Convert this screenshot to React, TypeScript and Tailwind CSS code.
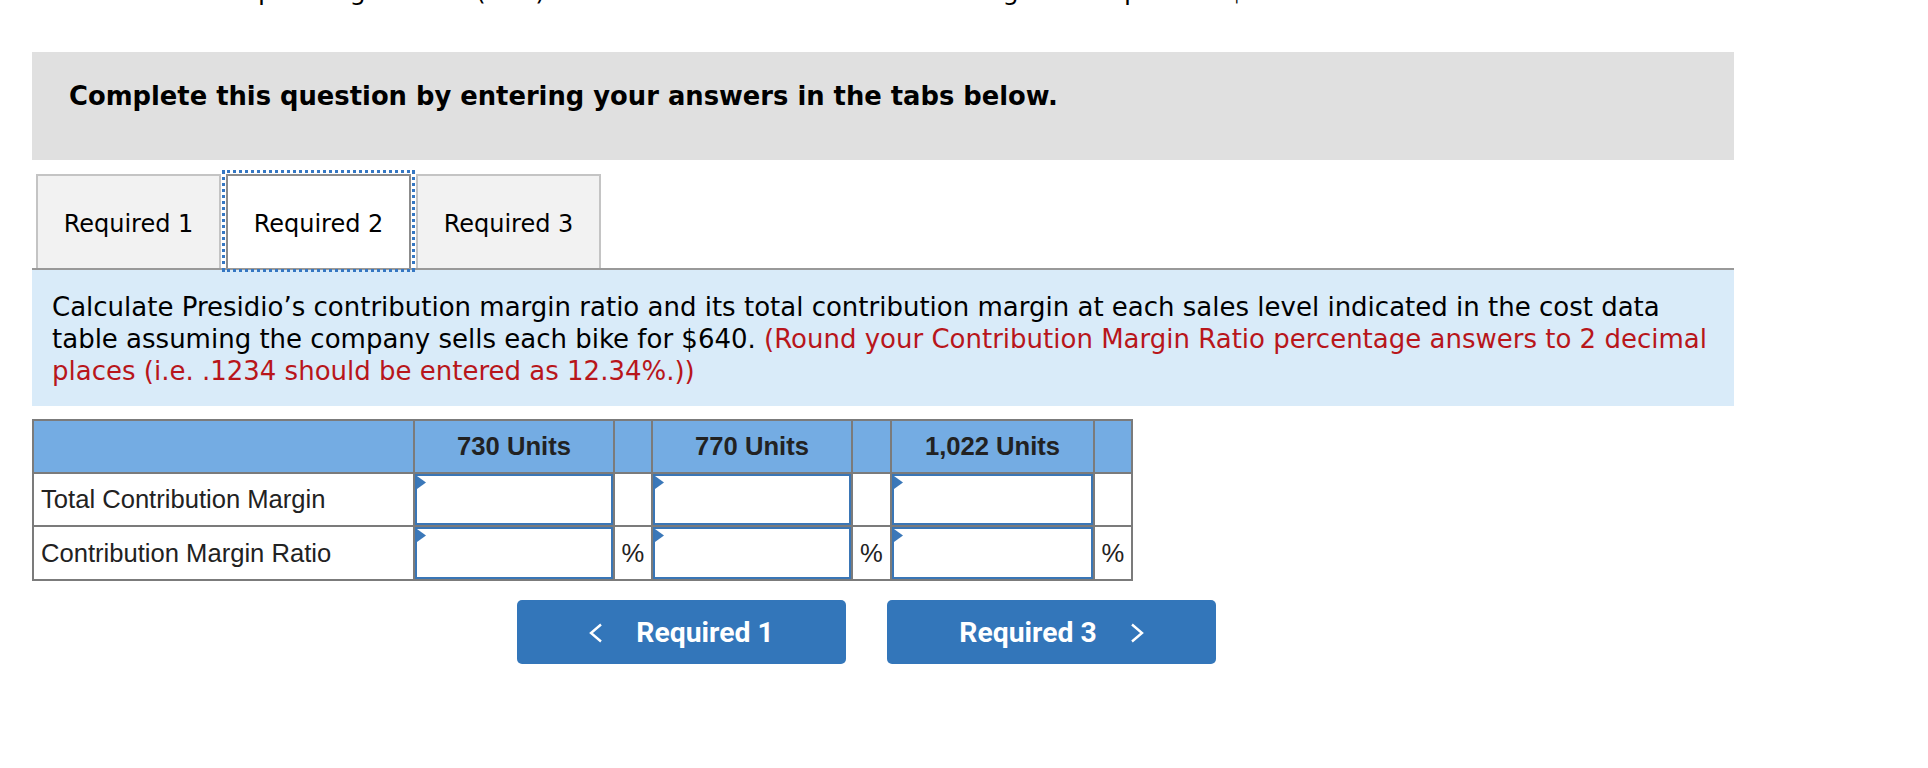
import React from 'react';

const units = ['730 Units', '770 Units', '1,022 Units'];

const rows = [
  { label: 'Total Contribution Margin', pct: false, h: 'h-[51px]' },
  { label: 'Contribution Margin Ratio', pct: true, h: 'h-[52px]' },
];

function Marker() {
  return (
    <svg
      className="pointer-events-none absolute left-[2px] top-[2px]"
      width="9"
      height="13"
      viewBox="0 0 9 13"
    >
      <polygon points="0,0 9,6.5 0,13" fill="#3b78b9" />
    </svg>
  );
}

function Chevron({ dir }: { dir: 'left' | 'right' }) {
  return (
    <svg width="14" height="20" viewBox="0 0 14 20">
      <polyline
        points={dir === 'left' ? '12,1.5 2,10 12,18.5' : '2,1.5 12,10 2,18.5'}
        fill="none"
        stroke="white"
        strokeWidth="2.4"
      />
    </svg>
  );
}

export default function App() {
  return (
    <div className="min-h-[768px] w-full bg-white font-['DejaVu_Sans',Verdana,sans-serif] text-black">
      {/* bottom of the question line, scrolled off the top */}
      <div className="h-[8px] overflow-hidden pl-[32px]">
        <p className="-mt-[25px] whitespace-nowrap text-[25.6px] leading-[32px]">
          3. Calculate net operating income (loss) at each of the sales levels assuming a sales price of $640.
        </p>
      </div>

      <div className="ml-[32px] mt-[44px] w-[1702px]">
        <div className="h-[108px] bg-[#e0e0e0] pl-[37px] pt-[25px]">
          <h2 className="text-[25.8px] font-bold leading-normal">
            Complete this question by entering your answers in the tabs below.
          </h2>
        </div>

        <div className="mt-[14px] flex gap-[5px] pl-[4px]">
          <div className="flex h-[94px] w-[185px] items-center justify-center border-2 border-b-0 border-[#c4c4c4] bg-[#f2f2f2] pt-[4px] text-[24px]">
            Required 1
          </div>
          <div className="relative z-10 flex h-[94px] w-[185px] items-center justify-center border-2 border-b-0 border-[#8c8c8c] bg-white pt-[4px] text-[24px] outline-3 outline-offset-1 outline-dotted outline-[#3577c3]">
            Required 2
          </div>
          <div className="flex h-[94px] w-[185px] items-center justify-center border-2 border-b-0 border-[#c4c4c4] bg-[#f2f2f2] pt-[4px] text-[24px]">
            Required 3
          </div>
        </div>
        <div className="h-[2px] bg-[#999999]" />

        <div className="bg-[#d9ebf9] pb-[19px] pl-[20px] pt-[21px] text-[26px] leading-[32px]">
          <p className="whitespace-nowrap">
            Calculate Presidio’s contribution margin ratio and its total contribution margin at each sales level
            indicated in the cost data
            <br />
            table assuming the company sells each bike for $640.{' '}
            <span className="text-[#b8161b]">
              (Round your Contribution Margin Ratio percentage answers to 2 decimal
              <br />
              places (i.e. .1234 should be entered as 12.34%.))
            </span>
          </p>
        </div>

        <table className="mt-[13px] w-[1099px] table-fixed border-collapse font-['Liberation_Sans',Arial,sans-serif] text-[25.6px] text-[#222]">
          <colgroup>
            <col className="w-[381px]" />
            <col className="w-[200px]" />
            <col className="w-[38px]" />
            <col className="w-[200px]" />
            <col className="w-[39px]" />
            <col className="w-[203px]" />
            <col className="w-[38px]" />
          </colgroup>
          <thead>
            <tr className="h-[53px] bg-[#74ace3]">
              <th className="border-2 border-[#7b7b7b]" />
              {units.map((u) => (
                <React.Fragment key={u}>
                  <th className="border-2 border-[#7b7b7b] text-center font-bold">{u}</th>
                  <th className="border-2 border-[#7b7b7b]" />
                </React.Fragment>
              ))}
            </tr>
          </thead>
          <tbody>
            {rows.map((row) => (
              <tr key={row.label}>
                <td className="border-2 border-[#7b7b7b] pl-[7px] text-left">{row.label}</td>
                {units.map((u) => (
                  <React.Fragment key={u}>
                    <td className="border-2 border-[#7b7b7b] p-0">
                      <div className="relative">
                        <input
                          type="text"
                          aria-label={`${row.label} ${u}`}
                          className={`block w-full border-2 border-[#3a76b6] bg-white px-2 outline-none ${row.h}`}
                        />
                        <Marker />
                      </div>
                    </td>
                    <td className="border-2 border-[#7b7b7b] text-center">{row.pct ? '%' : ''}</td>
                  </React.Fragment>
                ))}
              </tr>
            ))}
          </tbody>
        </table>

        <div className="ml-[485px] mt-[19px] flex gap-[41px]">
          <button
            type="button"
            className="flex h-[64px] w-[329px] items-center justify-center gap-[33px] rounded-[5px] bg-[#3376ba] pt-[2px] font-['Roboto',sans-serif] text-[28.3px] font-bold text-white"
          >
            <Chevron dir="left" />
            Required 1
          </button>
          <button
            type="button"
            className="flex h-[64px] w-[329px] items-center justify-center gap-[33px] rounded-[5px] bg-[#3376ba] pt-[2px] font-['Roboto',sans-serif] text-[28.3px] font-bold text-white"
          >
            Required 3
            <Chevron dir="right" />
          </button>
        </div>
      </div>
    </div>
  );
}
